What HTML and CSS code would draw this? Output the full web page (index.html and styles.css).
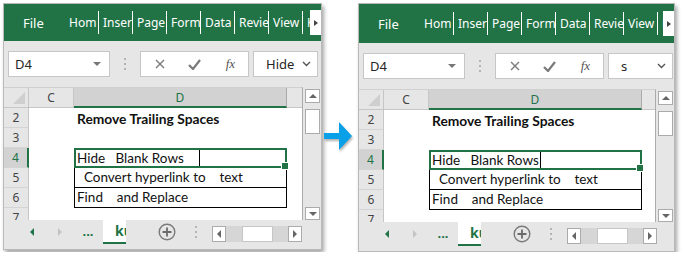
FILE: index.html
```html
<!DOCTYPE html>
<html lang="en">
<head>
    <meta charset="UTF-8">
    <title>Remove Trailing Spaces</title>
    <link rel="stylesheet" href="styles.css">
</head>
<body>

<div class="stage">

    <!-- Before -->
    <div class="xl">
        <div class="ribbon">
            <span class="file-tab">File</span>
            <div class="tabs">
                <span>Hom</span><span>Inser</span><span>Page</span><span>Form</span><span>Data</span><span>Revie</span><span>View</span><span>K</span>
            </div>
            <span class="tabs-more"><i></i></span>
        </div>
        <div class="fbar">
            <div class="namebox">D4<i class="caret"></i></div>
            <div class="grip"><b></b><b></b><b></b></div>
            <div class="fxbox">
                <span><svg width="10" height="10" viewBox="0 0 10 10"><path d="M1 1L9 9M9 1L1 9" stroke="#7a7a7a" stroke-width="1.4"/></svg></span>
                <span><svg width="13" height="11" viewBox="0 0 13 11"><path d="M1 6L5 10L12 1" fill="none" stroke="#7a7a7a" stroke-width="2.2"/></svg></span>
                <span class="fx">fx</span>
            </div>
            <div class="valbox">Hide<svg class="chev" width="9" height="6" viewBox="0 0 9 6"><path d="M1 1L4.5 4.5L8 1" fill="none" stroke="#555" stroke-width="1.4"/></svg></div>
        </div>
        <div class="grid">
            <div class="sheet">
                <div class="row head">
                    <div class="rh corner"><i></i></div>
                    <div class="c">C</div>
                    <div class="d sel">D</div>
                    <div class="e"></div>
                </div>
                <div class="row">
                    <div class="rh">2</div><div class="c"></div>
                    <div class="d"><span class="txt bold">Remove Trailing Spaces</span></div><div class="e"></div>
                </div>
                <div class="row">
                    <div class="rh">3</div><div class="c"></div><div class="d"></div><div class="e"></div>
                </div>
                <div class="row">
                    <div class="rh sel">4</div><div class="c"></div>
                    <div class="d active"><span class="txt split" style="width: 124px">Hide   Blank Rows</span></div><div class="e"></div>
                </div>
                <div class="row">
                    <div class="rh">5</div><div class="c"></div>
                    <div class="d boxed"><span class="txt">  Convert hyperlink to    text</span></div><div class="e"></div>
                </div>
                <div class="row">
                    <div class="rh">6</div><div class="c"></div>
                    <div class="d boxed"><span class="txt">Find    and Replace</span></div><div class="e"></div>
                </div>
                <div class="row">
                    <div class="rh">7</div><div class="c"></div><div class="d"></div><div class="e"></div>
                </div>
            </div>
            <div class="vscroll">
                <div class="sbtn"><i class="tri-up"></i></div>
                <div class="vthumb"></div>
                <div class="vspace"></div>
                <div class="sbtn"><i class="tri-down"></i></div>
            </div>
        </div>
        <div class="tabbar">
            <span class="nav"><i class="tri-left green"></i></span>
            <span class="nav"><i class="tri-right light"></i></span>
            <span class="nav dots">...</span>
            <span class="sheet-tab">ku</span>
            <span class="add-sheet"><svg width="18" height="18" viewBox="0 0 18 18"><circle cx="9" cy="9" r="7.8" fill="none" stroke="#7a7a7a" stroke-width="1.4"/><path d="M9 4.5V13.5M4.5 9H13.5" stroke="#6a6a6a" stroke-width="1.8"/></svg></span>
            <span class="grip tab-grip"><b></b><b></b><b></b></span>
            <div class="hscroll">
                <div class="sbtn"><i class="tri-left"></i></div>
                <div class="htrack"></div>
                <div class="hthumb"></div>
                <div class="htrack"></div>
                <div class="sbtn"><i class="tri-right"></i></div>
            </div>
        </div>
    </div>

    <!-- Arrow -->
    <div class="arrow">
        <svg width="36" height="32" viewBox="0 0 36 32"><path d="M2 13H17V2L30 16L17 30V19H2Z" fill="#0aa0e8"/></svg>
    </div>

    <!-- After -->
    <div class="xl xl-after">
        <div class="ribbon">
            <span class="file-tab">File</span>
            <div class="tabs">
                <span>Hom</span><span>Inser</span><span>Page</span><span>Form</span><span>Data</span><span>Revie</span><span>View</span><span>K</span>
            </div>
            <span class="tabs-more"><i></i></span>
        </div>
        <div class="fbar">
            <div class="namebox">D4<i class="caret"></i></div>
            <div class="grip"><b></b><b></b><b></b></div>
            <div class="fxbox">
                <span><svg width="10" height="10" viewBox="0 0 10 10"><path d="M1 1L9 9M9 1L1 9" stroke="#7a7a7a" stroke-width="1.4"/></svg></span>
                <span><svg width="13" height="11" viewBox="0 0 13 11"><path d="M1 6L5 10L12 1" fill="none" stroke="#7a7a7a" stroke-width="2.2"/></svg></span>
                <span class="fx">fx</span>
            </div>
            <div class="valbox">s<svg class="chev" width="9" height="6" viewBox="0 0 9 6"><path d="M1 1L4.5 4.5L8 1" fill="none" stroke="#555" stroke-width="1.4"/></svg></div>
        </div>
        <div class="grid">
            <div class="sheet">
                <div class="row head">
                    <div class="rh corner"><i></i></div>
                    <div class="c">C</div>
                    <div class="d sel">D</div>
                    <div class="e"></div>
                </div>
                <div class="row">
                    <div class="rh">2</div><div class="c"></div>
                    <div class="d"><span class="txt bold">Remove Trailing Spaces</span></div><div class="e"></div>
                </div>
                <div class="row">
                    <div class="rh">3</div><div class="c"></div><div class="d"></div><div class="e"></div>
                </div>
                <div class="row">
                    <div class="rh sel">4</div><div class="c"></div>
                    <div class="d active"><span class="txt split" style="width: 110px">Hide   Blank Rows</span></div><div class="e"></div>
                </div>
                <div class="row">
                    <div class="rh">5</div><div class="c"></div>
                    <div class="d boxed"><span class="txt">  Convert hyperlink to    text</span></div><div class="e"></div>
                </div>
                <div class="row">
                    <div class="rh">6</div><div class="c"></div>
                    <div class="d boxed"><span class="txt">Find    and Replace</span></div><div class="e"></div>
                </div>
                <div class="row">
                    <div class="rh">7</div><div class="c"></div><div class="d"></div><div class="e"></div>
                </div>
            </div>
            <div class="vscroll">
                <div class="sbtn"><i class="tri-up"></i></div>
                <div class="vthumb"></div>
                <div class="vspace"></div>
                <div class="sbtn"><i class="tri-down"></i></div>
            </div>
        </div>
        <div class="tabbar">
            <span class="nav"><i class="tri-left green"></i></span>
            <span class="nav"><i class="tri-right light"></i></span>
            <span class="nav dots">...</span>
            <span class="sheet-tab">ku</span>
            <span class="add-sheet"><svg width="18" height="18" viewBox="0 0 18 18"><circle cx="9" cy="9" r="7.8" fill="none" stroke="#7a7a7a" stroke-width="1.4"/><path d="M9 4.5V13.5M4.5 9H13.5" stroke="#6a6a6a" stroke-width="1.8"/></svg></span>
            <span class="grip tab-grip"><b></b><b></b><b></b></span>
            <div class="hscroll">
                <div class="sbtn"><i class="tri-left"></i></div>
                <div class="htrack"></div>
                <div class="hthumb"></div>
                <div class="htrack"></div>
                <div class="sbtn"><i class="tri-right"></i></div>
            </div>
        </div>
    </div>

</div>

</body>
</html>
```

FILE: styles.css
```css
* {
    margin: 0;
    padding: 0;
    box-sizing: border-box;
}
body {
    background-color: #fff;
    font-family: 'Noto Sans', sans-serif;
    font-size: 12px;
    color: #262626;
}
.stage {
    display: flex;
    align-items: flex-start;
    padding: 3px 0 0 3px;
}

/* Window */
.xl {
    width: 319px;
    height: 247px;
    background-color: #e6e6e6;
    border: 1px solid #b9b9b9;
    box-shadow: 2px 3px 4px rgba(0, 0, 0, 0.35);
    display: flex;
    flex-direction: column;
    overflow: hidden;
    flex-shrink: 0;
}
.xl-after {
    width: 317px;
    height: 249px;
}

/* Ribbon */
.ribbon {
    height: 37px;
    background-color: #217346;
    color: white;
    display: flex;
    align-items: center;
    flex-shrink: 0;
}
.xl-after .ribbon {
    height: 39px;
}
.file-tab {
    width: 61px;
    padding-left: 19px;
    font-size: 13px;
    flex-shrink: 0;
}
.tabs {
    flex: 1;
    display: flex;
    overflow: hidden;
    white-space: nowrap;
}
.tabs span {
    width: 34px;
    height: 23px;
    line-height: 23px;
    padding-left: 4px;
    border-right: 1px solid white;
    overflow: hidden;
    flex-shrink: 0;
}
.tabs span:last-child {
    width: 10px;
    border-right: none;
}
.tabs-more {
    width: 11px;
    height: 25px;
    background-color: white;
    display: flex;
    align-items: center;
    justify-content: center;
    flex-shrink: 0;
}
.tabs-more i {
    border-left: 4px solid #444;
    border-top: 3px solid transparent;
    border-bottom: 3px solid transparent;
}

/* Formula bar */
.fbar {
    height: 46px;
    display: flex;
    align-items: flex-start;
    padding: 10px 0 0 4px;
    flex-shrink: 0;
}
.namebox, .fxbox, .valbox {
    height: 26px;
    background-color: white;
    border: 1px solid #c6c6c6;
    display: flex;
    align-items: center;
    font-size: 13px;
}
.namebox {
    width: 102px;
    padding-left: 6px;
    justify-content: space-between;
    padding-right: 8px;
}
.caret {
    border-top: 4px solid #777;
    border-left: 4px solid transparent;
    border-right: 4px solid transparent;
}
.grip {
    width: 30px;
    height: 26px;
    display: flex;
    flex-direction: column;
    align-items: center;
    justify-content: center;
    gap: 3px;
}
.grip b {
    width: 2px;
    height: 2px;
    background-color: #b4b4b4;
}
.fxbox {
    width: 109px;
    padding-left: 1px;
}
.fxbox span {
    width: 36px;
    display: flex;
    justify-content: center;
}
.fxbox .fx {
    font-family: 'Liberation Serif', serif;
    font-style: italic;
    font-size: 13px;
    color: #555;
}
.valbox {
    width: 65px;
    margin-left: 4px;
    padding: 0 6px 0 12px;
    justify-content: space-between;
}

/* Grid */
.grid {
    height: 133px;
    display: flex;
    flex-shrink: 0;
}
.sheet {
    flex: 1;
    background-color: white;
    border-top: 1px solid #d0d0d0;
    border-right: 1px solid #ababab;
    overflow: hidden;
}
.row {
    display: flex;
    height: 20px;
}
.row > div {
    height: 20px;
    flex-shrink: 0;
}
.rh {
    width: 25px;
    background-color: #e6e6e6;
    border-right: 1px solid #c6c6c6;
    border-bottom: 1px solid #d4d4d4;
    text-align: center;
    line-height: 19px;
    font-size: 12px;
    color: #444;
}
.rh.sel {
    background-color: #d2d2d2;
    border-right: 2px solid #217346;
    color: #217346;
}
.corner {
    display: flex;
    align-items: flex-end;
    justify-content: flex-end;
    padding: 0 3px 3px 0;
}
.corner i {
    border-style: solid;
    border-width: 0 0 12px 12px;
    border-color: transparent transparent #cfcfcf transparent;
}
.c {
    width: 45px;
}
.d {
    width: 213px;
}
.e {
    flex: 1;
}
.row.head > div {
    background-color: #e6e6e6;
    text-align: center;
    line-height: 19px;
    color: #444;
    border-bottom: 1px solid #c6c6c6;
}
.row.head .c {
    border-right: 1px solid #c6c6c6;
}
.row.head .d.sel {
    background-color: #d2d2d2;
    color: #217346;
    border-bottom: 2px solid #217346;
    border-right: 1px solid #ababab;
}
.txt {
    display: block;
    white-space: pre;
    font-family: 'Lato', sans-serif;
    font-size: 13.5px;
    color: #111;
    line-height: 19px;
    padding-left: 3px;
}
.bold {
    font-weight: bold;
    font-size: 13.8px;
    line-height: 21px;
}
.d.active {
    border: 2px solid #217346;
    position: relative;
}
.d.active .txt {
    line-height: 16px;
    padding-left: 1px;
}
.d.active::after {
    content: '';
    position: absolute;
    right: -4px;
    bottom: -4px;
    width: 6px;
    height: 6px;
    background-color: #217346;
    border: 1px solid white;
}
.split {
    height: 16px;
    border-right: 1px solid #000;
}
.d.boxed {
    border-left: 1px solid #000;
    border-right: 1px solid #000;
    border-bottom: 1px solid #000;
}
.d.boxed .txt {
    padding-left: 2px;
}

/* Vertical scrollbar */
.vscroll {
    width: 18px;
    padding: 2px 1px 0 2px;
    display: flex;
    flex-direction: column;
    flex-shrink: 0;
}
.sbtn {
    width: 15px;
    height: 14px;
    background-color: white;
    border: 1px solid #ababab;
    display: flex;
    align-items: center;
    justify-content: center;
    flex-shrink: 0;
}
.vthumb {
    height: 25px;
    margin-top: 6px;
    background-color: white;
    border: 1px solid #ababab;
}
.vspace {
    flex: 1;
}
.vscroll .sbtn:last-child {
    height: 13px;
}
.tri-up, .tri-down, .tri-left, .tri-right {
    width: 0;
    height: 0;
}
.tri-up {
    border-bottom: 4px solid #666;
    border-left: 4px solid transparent;
    border-right: 4px solid transparent;
}
.tri-down {
    border-top: 4px solid #666;
    border-left: 4px solid transparent;
    border-right: 4px solid transparent;
}
.tri-left {
    border-right: 4px solid #666;
    border-top: 4px solid transparent;
    border-bottom: 4px solid transparent;
}
.tri-right {
    border-left: 4px solid #666;
    border-top: 4px solid transparent;
    border-bottom: 4px solid transparent;
}
.tri-left.green {
    border-right-color: #217346;
}
.tri-right.light {
    border-left-color: #c4c4c4;
}

/* Sheet tabs */
.tabbar {
    flex: 1;
    display: flex;
    align-items: flex-start;
    padding-left: 14px;
}
.nav {
    width: 28px;
    height: 24px;
    display: flex;
    align-items: center;
    justify-content: center;
}
.dots {
    color: #217346;
    font-weight: bold;
    font-size: 13px;
    padding-bottom: 2px;
}
.sheet-tab {
    width: 23px;
    height: 24px;
    margin-left: 1px;
    background-color: white;
    border-bottom: 2px solid #217346;
    color: #217346;
    font-weight: bold;
    font-size: 14px;
    line-height: 22px;
    padding-left: 12px;
    overflow: hidden;
}
.add-sheet {
    width: 20px;
    height: 24px;
    margin-left: 31px;
    display: flex;
    align-items: center;
    justify-content: center;
}
.tab-grip {
    width: 20px;
    height: 24px;
    margin-left: 9px;
}
.hscroll {
    width: 90px;
    height: 16px;
    margin: 6px 0 0 6px;
    display: flex;
}
.hscroll .sbtn {
    width: 14px;
    height: 16px;
}
.htrack {
    flex: 1;
    background-color: #d6d6d6;
}
.hthumb {
    width: 31px;
    background-color: white;
    border: 1px solid #c6c6c6;
}

/* Arrow */
.arrow {
    width: 36px;
    margin-top: 117px;
    flex-shrink: 0;
    display: flex;
}
.arrow svg {
    filter: drop-shadow(1px 2px 1px rgba(0, 0, 0, 0.3));
}
```
